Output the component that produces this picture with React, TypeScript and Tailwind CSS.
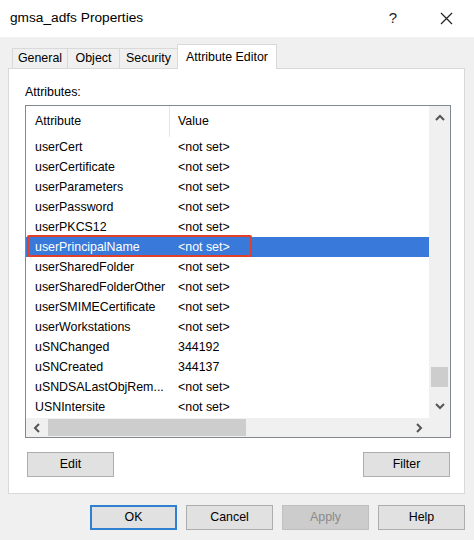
import type { ReactNode } from 'react'

const rows: [string, string][] = [
  ['userCert', '<not set>'],
  ['userCertificate', '<not set>'],
  ['userParameters', '<not set>'],
  ['userPassword', '<not set>'],
  ['userPKCS12', '<not set>'],
  ['userPrincipalName', '<not set>'],
  ['userSharedFolder', '<not set>'],
  ['userSharedFolderOther', '<not set>'],
  ['userSMIMECertificate', '<not set>'],
  ['userWorkstations', '<not set>'],
  ['uSNChanged', '344192'],
  ['uSNCreated', '344137'],
  ['uSNDSALastObjRem...', '<not set>'],
  ['USNIntersite', '<not set>'],
]

const tabs: [string, string][] = [
  ['General', 'w-[56px]'],
  ['Object', 'w-[53px]'],
  ['Security', 'w-[59px]'],
  ['Attribute Editor', 'w-[100px]'],
]

function Chevron({ dir }: { dir: 'up' | 'down' | 'left' | 'right' }) {
  const pts = {
    up: '1,6 5,2 9,6',
    down: '1,2 5,6 9,2',
    left: '6,1 2,5 6,9',
    right: '2,1 6,5 2,9',
  }[dir]
  const vertical = dir === 'up' || dir === 'down'
  return (
    <svg width={vertical ? 10 : 8} height={vertical ? 8 : 10} viewBox={vertical ? '0 0 10 8' : '0 0 8 10'}>
      <polyline points={pts} fill="none" stroke="#555" strokeWidth="2" />
    </svg>
  )
}

function Btn({ children, className = '' }: { children: ReactNode; className?: string }) {
  return (
    <div className={`w-[87px] h-[25px] flex items-center justify-center border ${className}`}>
      {children}
    </div>
  )
}

export default function App() {
  return (
    <div
      className="w-[474px] h-[540px] bg-[#f0f0f0] flex flex-col text-[12.4px] text-black overflow-hidden"
      style={{ fontFamily: '"Liberation Sans", Arial, sans-serif' }}
    >
      {/* Title bar */}
      <div className="h-[37px] bg-white flex items-center pl-[10px] shrink-0">
        <span className="text-[13.7px] flex-1">gmsa_adfs Properties</span>
        <span className="text-[15px] w-[54px] text-center text-[#222]">?</span>
        <svg width="13" height="13" viewBox="0 0 13 13" className="mr-[21px] ml-[20px]">
          <path d="M1 1 L12 12 M12 1 L1 12" stroke="#222" strokeWidth="1.2" />
        </svg>
      </div>

      {/* Tabs */}
      <div className="flex items-end pl-[12px] pt-[7px] h-[31px] shrink-0">
        {tabs.map(([t, w], i) => {
          const active = i === tabs.length - 1
          return (
            <div
              key={t}
              className={
                active
                  ? `relative z-10 -mb-px h-[25px] ${w} flex items-center justify-center bg-white border border-b-0 border-[#d9d9d9]`
                  : `h-[20px] ${w} flex items-center justify-center bg-[#f0f0f0] border border-b-0 border-[#d9d9d9] -mr-px`
              }
            >
              {t}
            </div>
          )
        })}
      </div>

      {/* Panel */}
      <div className="ml-[8px] w-[457px] h-[426px] bg-white border border-[#d9d9d9] pt-[15px] pl-[16px] flex flex-col shrink-0">
        <div className="h-[16px] leading-[16px]">Attributes:</div>

        {/* List box */}
        <div className="mt-[5px] w-[426px] h-[333px] border border-[#828790] flex flex-col">
          <div className="flex h-[312px]">
            <div className="flex-1 flex flex-col">
              <div className="h-[31px] flex items-center">
                <div className="w-[144px] h-full flex items-center pl-[9px] border-r border-[#e5e5e5]">Attribute</div>
                <div className="pl-[8px]">Value</div>
              </div>
              {rows.map(([name, value]) => {
                const sel = name === 'userPrincipalName'
                return (
                  <div
                    key={name}
                    className={`relative h-[20px] flex items-center ${sel ? 'bg-[#3879d9] text-white' : ''}`}
                  >
                    <div className="w-[152px] pl-[9px] whitespace-nowrap">{name}</div>
                    <div className="whitespace-nowrap">{value}</div>
                    {sel && (
                      <div className="absolute left-[1px] top-[-2px] w-[225px] h-[22px] border-[2.5px] border-[#e0402a] rounded-[2px]" />
                    )}
                  </div>
                )
              })}
            </div>
            {/* Vertical scrollbar */}
            <div className="w-[21px] bg-[#f0f0f0] flex flex-col">
              <div className="h-[24px] flex items-center justify-center">
                <Chevron dir="up" />
              </div>
              <div className="flex-1" />
              <div className="h-[20px] mx-[2px] bg-[#cdcdcd]" />
              <div className="h-[7px]" />
              <div className="h-[24px] flex items-center justify-center">
                <Chevron dir="down" />
              </div>
            </div>
          </div>
          {/* Horizontal scrollbar */}
          <div className="h-[19px] flex bg-[#f0f0f0]">
            <div className="w-[21px] flex items-center justify-center">
              <Chevron dir="left" />
            </div>
            <div className="flex-1 flex items-center pl-[1px]">
              <div className="w-[198px] h-[17px] bg-[#cdcdcd]" />
            </div>
            <div className="w-[21px] flex items-center justify-center">
              <Chevron dir="right" />
            </div>
            <div className="w-[21px]" />
          </div>
        </div>

        <div className="mt-[14px] ml-[2px] w-[423px] flex justify-between">
          <Btn className="bg-[#e1e1e1] border-[#adadad]">Edit</Btn>
          <Btn className="bg-[#e1e1e1] border-[#adadad]">Filter</Btn>
        </div>
      </div>

      {/* Dialog buttons */}
      <div className="mt-[11px] flex justify-end gap-[9px] pr-[9px]">
        <Btn className="bg-[#e1e1e1] border-2 border-[#2f7fd3]">OK</Btn>
        <Btn className="bg-[#e1e1e1] border-[#adadad]">Cancel</Btn>
        <Btn className="bg-[#cccccc] border-[#bfbfbf] text-[#8a8a8a]">Apply</Btn>
        <Btn className="bg-[#e1e1e1] border-[#adadad]">Help</Btn>
      </div>
    </div>
  )
}
